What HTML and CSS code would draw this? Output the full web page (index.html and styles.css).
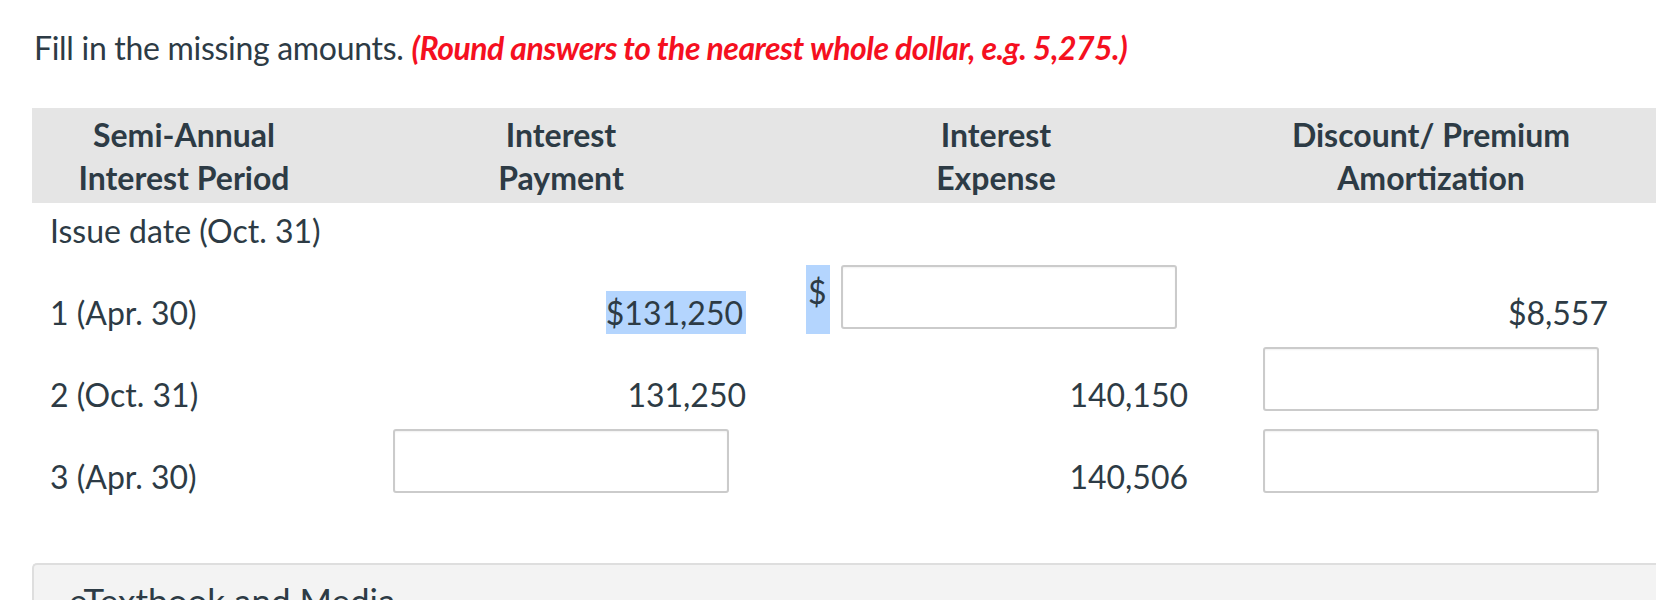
FILE: index.html
```html
<!DOCTYPE html>
<html lang="en">
<head>
<meta charset="utf-8">
<title>Fill in the missing amounts</title>
<link rel="stylesheet" href="styles.css">
</head>
<body>
<div class="page">
  <p class="prompt">Fill in the missing amounts. <em class="note">(Round answers to the nearest whole dollar, e.g. 5,275.)</em></p>

  <div class="table">
    <div class="row head">
      <div class="th">Semi-Annual<br>Interest Period</div>
      <div class="th">Interest<br>Payment</div>
      <div class="th">Interest<br>Expense</div>
      <div class="th">Discount/ Premium<br>Amortization</div>
    </div>

    <div class="row issue">
      <div class="label">Issue date (Oct. 31)</div>
    </div>

    <div class="row entry">
      <div class="label">1 (Apr. 30)</div>
      <div class="num c2"><span class="sel">$131,250</span></div>
      <div class="c3 dollar-group">
        <span class="sel dollar">$</span>
        <input class="box" type="text" aria-label="Interest expense period 1">
      </div>
      <div class="num c4">$8,557</div>
    </div>

    <div class="row entry">
      <div class="label">2 (Oct. 31)</div>
      <div class="num c2">131,250</div>
      <div class="num c3">140,150</div>
      <div class="inputcell"><input class="box" type="text" aria-label="Amortization period 2"></div>
    </div>

    <div class="row entry">
      <div class="label">3 (Apr. 30)</div>
      <div class="inputcell"><input class="box" type="text" aria-label="Interest payment period 3"></div>
      <div class="num c3">140,506</div>
      <div class="inputcell"><input class="box" type="text" aria-label="Amortization period 3"></div>
    </div>
  </div>

  <div class="media">
    <span class="media-title">eTextbook and Media</span>
  </div>
</div>
</body>
</html>
```

FILE: styles.css
```css
html {
  overflow: hidden;
}

body {
  margin: 0;
  background: #ffffff;
  color: #2d3b45;
  font-family: Lato, "Open Sans", "Liberation Sans", sans-serif;
  font-size: 32px;
  line-height: 43px;
}

.page {
  padding: 26px 0 0 32px;
}

.prompt {
  margin: 0 0 0 2px;
  line-height: 43px;
  letter-spacing: -0.3px;
}

.note {
  color: #f5101f;
  font-weight: 700;
  font-style: italic;
  letter-spacing: -0.5px;
}

.table {
  margin-top: 39px;
}

.row {
  display: grid;
  grid-template-columns: 304px 450px 420px 450px;
}

.head {
  background: #e5e5e5;
  padding: 5px 0 4px;
}

.th {
  text-align: center;
  font-weight: 700;
  line-height: 43px;
}

.issue {
  padding-top: 6px;
}

.label {
  padding-left: 18px;
}

.entry {
  height: 82px;
  box-sizing: border-box;
  padding-top: 13px;
  align-items: end;
}

.num {
  text-align: right;
}

.c2 {
  padding-right: 40px;
}

.c3 {
  padding-right: 18px;
}

.c4 {
  padding-right: 48px;
}

.sel {
  background: #b4d5fe;
}

.c2 .sel {
  display: inline-block;
  padding: 0 3px 0 0;
}

.dollar-group {
  display: flex;
  align-items: flex-end;
  padding-left: 20px;
  padding-right: 0;
}

.dollar {
  display: block;
  width: 22px;
  height: 69px;
  padding-left: 2px;
  line-height: 54px;
  margin-right: 11px;
}

.inputcell {
  display: flex;
  justify-content: center;
}

.box {
  display: block;
  width: 336px;
  height: 64px;
  box-sizing: border-box;
  margin: 0 0 5px;
  border: 2px solid #cbcbcb;
  border-radius: 3px;
  box-shadow: inset 0 1px 2px rgba(0, 0, 0, 0.06);
  background: #ffffff;
  font: inherit;
  color: inherit;
  padding: 0 10px;
}

.media {
  margin-top: 65px;
  background: #f3f3f3;
  border: 2px solid #dedede;
  border-right: none;
  border-radius: 5px 0 0 0;
  padding: 14px 35px 20px;
  height: 80px;
}

.media-title {
  color: #2d3b45;
  font-size: 35px;
}
```
